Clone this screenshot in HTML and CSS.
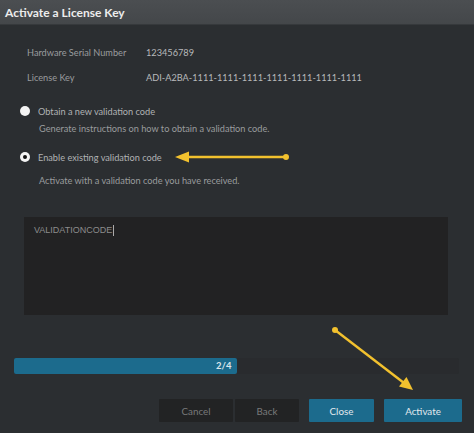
FILE: index.html
```html
<!DOCTYPE html>
<html>
<head>
<meta charset="utf-8">
<link rel="stylesheet" href="styles.css">
</head>
<body>
<div class="dialog">
  <div class="titlebar">Activate a License Key</div>
  <div class="info">
    <div class="label">Hardware Serial Number</div><div class="value">123456789</div>
    <div class="label">License Key</div><div class="value">ADI-A2BA-1111-1111-1111-1111-1111-1111-1111</div>
  </div>
  <div class="option first">
    <span class="radio"></span><span class="opt-label">Obtain a new validation code</span>
  </div>
  <div class="desc">Generate instructions on how to obtain a validation code.</div>
  <div class="option second">
    <span class="radio checked"></span><span class="opt-label">Enable existing validation code</span>
  </div>
  <div class="desc">Activate with a validation code you have received.</div>
  <div class="codebox"><span class="code">VALIDATIONCODE</span><span class="caret"></span></div>
  <div class="progress"><div class="fill" style="width:50%">2/4</div></div>
  <div class="buttons">
    <button class="btn dark">Cancel</button>
    <button class="btn dark">Back</button>
    <button class="btn blue gap">Close</button>
    <button class="btn blue wide">Activate</button>
  </div>
  <svg class="annot" width="474" height="433" viewBox="0 0 474 433">
    <g fill="#f2c12e" stroke="#f2c12e">
      <line x1="286" y1="157" x2="186" y2="157" stroke-width="2.4"/>
      <circle cx="286" cy="157" r="3" stroke="none"/>
      <polygon points="175,157 189,151.5 189,162.5" stroke="none"/>
      <line x1="335" y1="330" x2="404" y2="383" stroke-width="2.4"/>
      <circle cx="335" cy="330" r="3" stroke="none"/>
      <polygon points="413,390 399,386.5 406.5,377" stroke="none"/>
    </g>
  </svg>
</div>
</body>
</html>
```

FILE: styles.css
```css
* { box-sizing: border-box; }
html, body { margin: 0; padding: 0; }
body {
  background: #2b2e31;
  font-family: Lato, "Open Sans", sans-serif;
  width: 474px;
  height: 433px;
  overflow: hidden;
}
.dialog {
  position: relative;
  width: 474px;
  height: 433px;
  background: #2b2e31;
}
.titlebar {
  height: 25px;
  line-height: 25px;
  padding-left: 5px;
  background: linear-gradient(#4b4e51, #44474a);
  border-bottom: 1px solid #36393c;
  color: #ececec;
  font-weight: bold;
  font-size: 12px;
}
.info {
  display: grid;
  grid-template-columns: 119px auto;
  margin: 15px 0 0 27px;
  grid-auto-rows: 25px;
  align-items: center;
  font-size: 9.2px;
}
.label { color: #9a9c9e; }
.value { color: #b8babc; }
.option {
  display: flex;
  align-items: center;
  height: 18px;
  margin-left: 20px;
  color: #b0b2b4;
  font-size: 9.2px;
}
.option.first { margin-top: 12px; }
.option.second { margin-top: 10px; }
.radio {
  width: 10px;
  height: 10px;
  border-radius: 50%;
  background: #f4f4f4;
  margin-right: 8px;
  display: flex;
  align-items: center;
  justify-content: center;
}
.radio.checked::after {
  content: "";
  width: 4px;
  height: 4px;
  border-radius: 50%;
  background: #111;
}
.desc {
  height: 18px;
  line-height: 18px;
  margin-left: 39px;
  color: #9a9c9e;
  font-size: 9.2px;
}
.option.second + .desc { margin-top: 6px; }
.codebox {
  margin: 27px 0 0 24px;
  width: 424px;
  height: 98px;
  background: #222223;
  padding: 8px 10px;
  font-family: "Liberation Sans", Arial, sans-serif;
  font-size: 9px;
  color: #8c8c8c;
  display: flex;
  align-items: flex-start;
}
.caret {
  width: 1px;
  height: 11px;
  background: #aaa;
  margin-left: 1px;
}
.progress {
  margin: 43px 0 0 14px;
  width: 445px;
  height: 16px;
  background: #292b2e;
  border-radius: 2px;
}
.fill {
  height: 16px;
  background: #1c6b8d;
  border-radius: 2px;
  color: #dde6ec;
  font-size: 9.5px;
  font-weight: bold;
  text-align: right;
  line-height: 16px;
  padding-right: 5px;
}
.buttons {
  display: flex;
  justify-content: flex-end;
  margin-top: 25px;
  padding-right: 12px;
  gap: 2px;
}
.btn {
  height: 23px;
  border: none;
  border-radius: 1px;
  font-family: Lato, sans-serif;
  font-size: 9.8px;
  padding: 0;
}
.btn.dark {
  background: #222324;
  color: #78797a;
  width: 74px;
}
.btn.dark + .btn.dark { width: 64px; }
.btn.blue {
  background: #1c6b8d;
  color: #e2e9ed;
  width: 65px;
}
.btn.gap { margin-left: 8px; }
.btn.wide { width: 78px; margin-left: 8px; }
.annot {
  position: absolute;
  left: 0;
  top: 0;
  pointer-events: none;
}
```
